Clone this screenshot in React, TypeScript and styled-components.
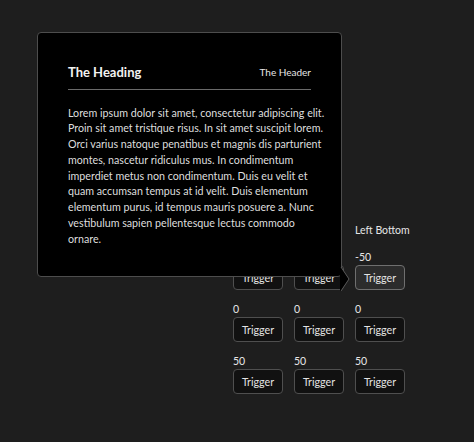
import styled, { createGlobalStyle, css } from "styled-components";

/*--------------------------
    Global
--------------------------*/
const GlobalStyle = createGlobalStyle`
    html, body {
        margin: 0;
        padding: 0;
        background-color: #1e1e1e;
    }
    body {
        font-family: Lato, "Open Sans", "Liberation Sans", sans-serif;
        color: #e3e3e3;
    }
    * {
        box-sizing: border-box;
    }
`;

/*--------------------------
    Styled
--------------------------*/
const Page = styled.div`
    position: relative;
    min-height: 442px;
    padding: 222px 0 0 233px;
`;

const Grid = styled.div`
    display: flex;
    gap: 11px;
`;

const Column = styled.div`
    display: flex;
    flex-direction: column;
    gap: 11px;
    width: 50px;
`;

const ColumnTitle = styled.div`
    min-height: 16px;
    font-size: 10.5px;
    line-height: 16px;
    white-space: nowrap;
    color: #e6e6e6;
`;

const Cell = styled.div`
    display: flex;
    flex-direction: column;
`;

const Offset = styled.div`
    font-size: 10.5px;
    line-height: 16px;
    color: #e6e6e6;
`;

const TriggerButton = styled.button<{ $active?: boolean }>`
    width: 50px;
    height: 25px;
    padding: 0;
    border: 1px solid #4f4f4f;
    border-radius: 4px;
    background-color: #111111;
    color: #e3e3e3;
    font-family: inherit;
    font-size: 10.7px;
    cursor: pointer;

    ${(p) =>
        p.$active &&
        css`
            border-color: #6f6f6f;
            background-color: #2c2c2c;
        `}
`;

const Popover = styled.div`
    position: absolute;
    left: 37px;
    top: 32px;
    width: 305px;
    height: 245px;
    padding: 29px 30px 0 30px;
    border: 1px solid #4d4d4d;
    border-radius: 4px;
    background-color: #000;
`;

const PopoverHead = styled.div`
    display: flex;
    align-items: center;
    justify-content: space-between;
    height: 20px;
`;

const Heading = styled.div`
    color: #f2f2f2;
    font-size: 13px;
    font-weight: bold;
    line-height: 20px;
`;

const HeaderText = styled.div`
    color: #e6e6e6;
    font-size: 10px;
    line-height: 16px;
`;

const Divider = styled.div`
    height: 1px;
    margin: 7px 0 0 0;
    background-color: #6a6a6a;
`;

const Body = styled.div`
    margin: 14.5px 0 0 0;
    color: #dedede;
    font-size: 10.7px;
    line-height: 15.75px;
`;

const Line = styled.span`
    display: block;
    white-space: nowrap;
`;

const Tip = styled.svg`
    position: absolute;
    left: calc(100% - 1px);
    top: 234px;
    overflow: visible;
`;

/*--------------------------
    Main
--------------------------*/
// the first two column titles sit under the open popover
const columns = [
    { title: "", offsets: ["-50", "0", "50"] },
    { title: "", offsets: ["-50", "0", "50"] },
    { title: "Left Bottom", offsets: ["-50", "0", "50"] },
];

const lines = [
    "Lorem ipsum dolor sit amet, consectetur adipiscing elit.",
    "Proin sit amet tristique risus. In sit amet suscipit lorem.",
    "Orci varius natoque penatibus et magnis dis parturient",
    "montes, nascetur ridiculus mus. In condimentum",
    "imperdiet metus non condimentum. Duis eu velit et",
    "quam accumsan tempus at id velit. Duis elementum",
    "elementum purus, id tempus mauris posuere a. Nunc",
    "vestibulum sapien pellentesque lectus commodo",
    "ornare.",
];

const App = () => {
    return (
        <>
            <GlobalStyle />
            <Page>
                <Grid>
                    {columns.map((col, ci) => (
                        <Column key={ci}>
                            <ColumnTitle>{col.title}</ColumnTitle>
                            {col.offsets.map((offset, ri) => (
                                <Cell key={offset}>
                                    <Offset>{offset}</Offset>
                                    <TriggerButton $active={ci === 2 && ri === 0}>Trigger</TriggerButton>
                                </Cell>
                            ))}
                        </Column>
                    ))}
                </Grid>

                <Popover>
                    <PopoverHead>
                        <Heading>The Heading</Heading>
                        <HeaderText>The Header</HeaderText>
                    </PopoverHead>
                    <Divider />
                    <Body>
                        {lines.map((line) => (
                            <Line key={line}>{line}</Line>
                        ))}
                    </Body>
                    <Tip width="9" height="24" viewBox="0 0 9 24">
                        <path d="M0 0 L1 0 L9 12 L1 24 L0 24 Z" fill="#000" />
                        <polyline points="1,0 9,12 1,24" fill="none" stroke="#5a5a5a" strokeWidth="1" />
                    </Tip>
                </Popover>
            </Page>
        </>
    );
};

export default App;
